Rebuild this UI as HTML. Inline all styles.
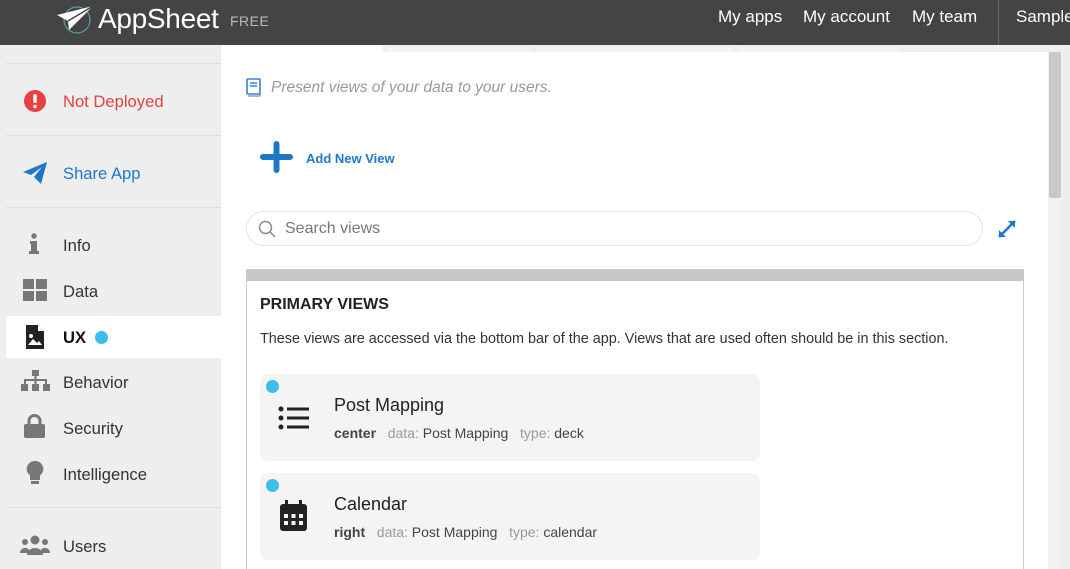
<!DOCTYPE html>
<html><head><meta charset="utf-8"><style>
*{box-sizing:border-box;margin:0;padding:0}
html,body{width:1070px;height:569px;overflow:hidden}
body{font-family:"Liberation Sans",sans-serif;background:#eee;position:relative}
.hdr{position:absolute;left:0;top:0;width:1070px;height:45px;background:#444;color:#fff}
.abs{position:absolute}
.nav{position:absolute;top:7px;font-size:17px;color:#fff}
.side{position:absolute;left:0;top:45px;width:221px;height:524px;background:#eee}
.sep{position:absolute;left:6px;width:215px;height:1px;background:#ddd}
.it{position:absolute;left:63px;font-size:16.6px;color:#333}
.ic{position:absolute;left:22px}
.main{position:absolute;left:221px;top:52px;width:827px;height:517px;background:#fff}
.card{position:absolute;left:260px;width:500px;height:87px;background:#f4f4f4;border-radius:8px}
.dot{position:absolute;width:13px;height:13px;border-radius:50%;background:#3dbde9}
.ct{position:absolute;left:74px;top:21px;font-size:18px;color:#222}
.cm{position:absolute;left:74px;top:51px;font-size:14px;color:#444}
.cm b{color:#444}
.cm .g{color:#999}
</style></head><body>
<div class="hdr">
<svg class="abs" style="left:55px;top:3px" width="40" height="32" viewBox="0 0 40 32"><circle cx="22" cy="17" r="13" fill="none" stroke="#5a9aa8" stroke-width="1.2"/><path d="M2 12 L38 3 L14 27 L13 18 Z" fill="#fff"/><path d="M13 18 L38 3" stroke="#444" stroke-width="1.5"/></svg>
<div class="abs" style="left:98px;top:3px;font-size:28px;color:#fff;letter-spacing:-0.3px">AppSheet</div>
<div class="abs" style="left:230px;top:13px;font-size:14px;color:#bbb;letter-spacing:0.5px">FREE</div>
<div class="nav" style="left:718px">My apps</div>
<div class="nav" style="left:803px">My account</div>
<div class="nav" style="left:912px">My team</div>
<div class="abs" style="left:998px;top:0;width:1px;height:45px;background:#666"></div>
<div class="nav" style="left:1016px">Sample</div>
</div>
<div class="abs" style="left:221px;top:45px;width:849px;height:7px;background:#eee"></div>
<div class="abs" style="left:221px;top:45px;width:162px;height:7px;background:#fff"></div>
<div class="abs" style="left:388px;top:47px;width:142px;height:5px;background:#f4f4f4"></div>
<div class="abs" style="left:536px;top:47px;width:196px;height:5px;background:#f4f4f4"></div>
<div class="abs" style="left:738px;top:47px;width:160px;height:5px;background:#f4f4f4"></div>
<div class="side">
<div class="sep" style="top:18px"></div>
<div class="sep" style="top:90px"></div>
<div class="sep" style="top:162px"></div>
<div class="sep" style="top:462px"></div>
<div class="abs" style="left:6px;top:271px;width:215px;height:42px;background:#fff"></div>
</div>
<svg class="ic" style="left:23px;top:89px" width="24" height="24"><circle cx="12" cy="12" r="11" fill="#e84040"/><rect x="10.3" y="5" width="3.4" height="9" rx="1.5" fill="#fff"/><circle cx="12" cy="17.5" r="1.8" fill="#fff"/></svg>
<div class="it" style="top:92px;color:#e84040">Not Deployed</div>
<svg class="ic" style="top:161px" width="26" height="24" viewBox="0 0 26 24"><path d="M1 11 L25 1 L19 23 L12 16 L20 6 L9 14 Z" fill="#1e78c8"/></svg>
<div class="it" style="top:164px;color:#1e78c8">Share App</div>
<svg class="ic" style="left:28px;top:233px" width="12" height="22"><circle cx="6" cy="3" r="2.7" fill="#777"/><path d="M2 8h7v10h2v3H1v-3h2v-7H2z" fill="#777"/></svg>
<div class="it" style="top:236px">Info</div>
<svg class="ic" style="left:23px;top:279px" width="24" height="22"><rect x="0" y="0" width="11" height="10" fill="#777"/><rect x="13" y="0" width="11" height="10" fill="#777"/><rect x="0" y="12" width="11" height="10" fill="#777"/><rect x="13" y="12" width="11" height="10" fill="#777"/></svg>
<div class="it" style="top:282px">Data</div>
<svg class="ic" style="left:26px;top:325px" width="18" height="24"><path d="M0 0h12l6 6v18H0z" fill="#222"/><path d="M12 0v6h6" fill="#fff"/><path d="M2 20l5-6 4 4 2-2 3 4z" fill="#fff"/><circle cx="5" cy="11" r="2" fill="#fff"/></svg>
<div class="it" style="top:328px;font-weight:bold;color:#111">UX</div>
<div class="dot" style="left:95px;top:331px"></div>
<svg class="ic" style="left:21px;top:370px" width="29" height="23"><rect x="11" y="0" width="7" height="6" fill="#777"/><path d="M14.5 6v4M4 14v-4h21v4M14.5 10v4" stroke="#777" stroke-width="2" fill="none"/><rect x="0" y="14" width="7" height="7" fill="#777"/><rect x="11" y="14" width="7" height="7" fill="#777"/><rect x="22" y="14" width="7" height="7" fill="#777"/></svg>
<div class="it" style="top:373px">Behavior</div>
<svg class="ic" style="left:24px;top:414px" width="21" height="24"><path d="M5 11V7a5.5 5.5 0 0 1 11 0v4" stroke="#777" stroke-width="3" fill="none"/><rect x="0" y="10" width="21" height="14" rx="2" fill="#777"/></svg>
<div class="it" style="top:419px">Security</div>
<svg class="ic" style="left:26px;top:461px" width="18" height="26"><path d="M9 0a8 8 0 0 1 5 14.5V19H4v-4.5A8 8 0 0 1 9 0z" fill="#777"/><rect x="5" y="20" width="8" height="3" fill="#777"/></svg>
<div class="it" style="top:465px">Intelligence</div>
<svg class="ic" style="left:20px;top:535px" width="30" height="20"><circle cx="15" cy="5" r="4.5" fill="#777"/><circle cx="5" cy="7" r="3" fill="#777"/><circle cx="25" cy="7" r="3" fill="#777"/><path d="M7 20a8 7 0 0 1 16 0z" fill="#777"/><path d="M0 18a5 5 0 0 1 9-3v3z" fill="#777"/><path d="M30 18a5 5 0 0 0-9-3v3z" fill="#777"/></svg>
<div class="it" style="top:537px">Users</div>

<div class="main"></div>
<svg class="abs" style="left:246px;top:78px" width="16" height="19"><rect x="1" y="1" width="13" height="15" rx="1" fill="none" stroke="#3a80cc" stroke-width="1.6"/><path d="M4 5h7M4 8h7" stroke="#3a80cc" stroke-width="1.4"/><path d="M1 16h13v2H2" fill="none" stroke="#3a80cc" stroke-width="1"/></svg>
<div class="abs" style="left:271px;top:79px;font-size:15.5px;font-style:italic;color:#999">Present views of your data to your users.</div>
<svg class="abs" style="left:260px;top:141px" width="33" height="32"><path d="M16.5 3v26M3 16h27" stroke="#1e78c8" stroke-width="6" stroke-linecap="round"/></svg>
<div class="abs" style="left:306px;top:151px;font-size:13px;font-weight:bold;color:#1e78c8">Add New View</div>
<div class="abs" style="left:246px;top:211px;width:737px;height:35px;border:1px solid #e4e4e4;border-radius:18px;background:#fff"></div>
<svg class="abs" style="left:258px;top:220px" width="18" height="18"><circle cx="7.5" cy="7.5" r="6" fill="none" stroke="#888" stroke-width="1.4"/><path d="M12 12l5 5" stroke="#888" stroke-width="1.4"/></svg>
<div class="abs" style="left:285px;top:220px;font-size:16px;color:#777">Search views</div>
<svg class="abs" style="left:996px;top:218px" width="22" height="22" viewBox="0 0 22 22"><path d="M3 19L19 3" stroke="#1e78c8" stroke-width="2.5"/><path d="M12 3h7v7z M3 12v7h7z" fill="#1e78c8"/></svg>
<div class="abs" style="left:246px;top:269px;width:778px;height:12px;background:#c8c8c8"></div>
<div class="abs" style="left:246px;top:281px;width:778px;height:288px;border-left:1px solid #ccc;border-right:1px solid #ccc;background:#fff"></div>
<div class="abs" style="left:260px;top:296px;font-size:16px;font-weight:bold;color:#222">PRIMARY VIEWS</div>
<div class="abs" style="left:260px;top:331px;font-size:14.4px;color:#333">These views are accessed via the bottom bar of the app. Views that are used often should be in this section.</div>
<div class="card" style="top:374px">
<div class="dot" style="left:6px;top:6px"></div>
<svg class="abs" style="left:18px;top:32px" width="32" height="24"><circle cx="3" cy="3" r="2.5" fill="#222"/><circle cx="3" cy="12" r="2.5" fill="#222"/><circle cx="3" cy="21" r="2.5" fill="#222"/><rect x="9" y="1.5" width="22" height="3" fill="#222"/><rect x="9" y="10.5" width="22" height="3" fill="#222"/><rect x="9" y="19.5" width="22" height="3" fill="#222"/></svg>
<div class="ct">Post Mapping</div>
<div class="cm"><b>center</b>&nbsp;&nbsp; <span class="g">data:</span> Post Mapping&nbsp;&nbsp; <span class="g">type:</span> deck</div>
</div>
<div class="card" style="top:473px">
<div class="dot" style="left:6px;top:6px"></div>
<svg class="abs" style="left:20px;top:27px" width="27" height="32"><rect x="5" y="0" width="3" height="6" fill="#222"/><rect x="19" y="0" width="3" height="6" fill="#222"/><rect x="0" y="4" width="27" height="27" rx="3" fill="#222"/><g fill="#f4f4f4"><rect x="4" y="14" width="4" height="4"/><rect x="11.5" y="14" width="4" height="4"/><rect x="19" y="14" width="4" height="4"/><rect x="4" y="21" width="4" height="4"/><rect x="11.5" y="21" width="4" height="4"/><rect x="19" y="21" width="4" height="4"/></g></svg>
<div class="ct">Calendar</div>
<div class="cm"><b>right</b>&nbsp;&nbsp; <span class="g">data:</span> Post Mapping&nbsp;&nbsp; <span class="g">type:</span> calendar</div>
</div>
<div class="abs" style="left:1048px;top:52px;width:14px;height:517px;background:#f1f1f1"></div>
<div class="abs" style="left:1049px;top:52px;width:12px;height:146px;background:#c8c8c8;border-radius:2px"></div>
</body></html>
